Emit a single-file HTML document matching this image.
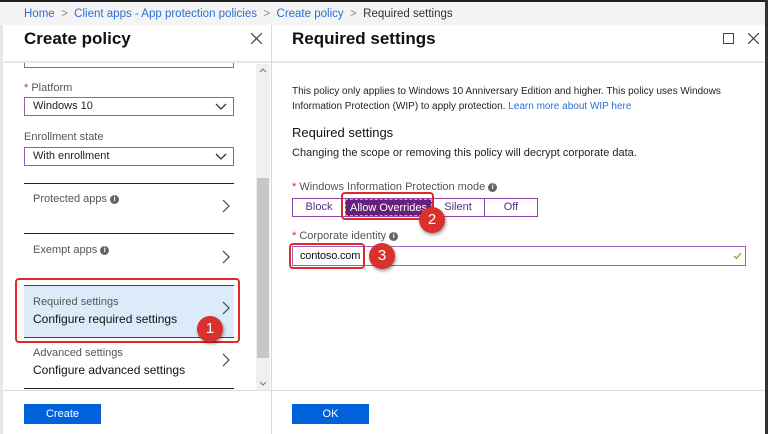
<!DOCTYPE html>
<html><head><style>
*{margin:0;padding:0;box-sizing:border-box}
body{width:768px;height:434px;overflow:hidden;background:#fff;font-family:"Liberation Sans",sans-serif;position:relative;color:#222}
.a{position:absolute}
.lbl{font-size:11px;color:#555}
.sel{position:absolute;left:24px;width:210px;height:19px;border:1px solid #9b59b6;font-size:11px;padding:2px 8px;color:#222}
.sel svg{position:absolute;right:6px;top:5px}
.hr{position:absolute;left:24px;width:210px;height:1px;background:#222}
.chev{position:absolute;left:222px}
.info{display:inline-block;width:9px;height:9px;border-radius:50%;background:#666;color:#fff;font-size:7px;text-align:center;line-height:9px;font-weight:bold;vertical-align:1px;margin-left:3px}
.badge{position:absolute;width:26px;height:26px;border-radius:50%;background:#d9312b;color:#fff;font-size:15px;text-align:center;line-height:26px;box-shadow:1px 2px 3px rgba(0,0,0,.4)}
.red{position:absolute;border:2px solid #e02a2a;border-radius:4px}
</style></head><body>
<div class="a" style="left:0;top:0;width:768px;height:2px;background:#222"></div>
<div class="a" style="left:765px;top:0;width:3px;height:434px;background:#333"></div>
<div class="a" style="left:0;top:2px;width:765px;height:23px;background:#f4f4f4;font-size:11.5px;line-height:24px;padding-left:24px;color:#2a6fd6">Home <span style="color:#888">&nbsp;&gt;&nbsp;</span> Client apps - App protection policies <span style="color:#888">&nbsp;&gt;&nbsp;</span> Create policy <span style="color:#888">&nbsp;&gt;&nbsp;</span> <span style="color:#333">Required settings</span></div>
<div class="a" style="left:0;top:25px;width:3px;height:409px;background:#e8e8e8"></div>
<!-- left panel -->
<div class="a" style="left:24px;top:29px;font-size:17px;font-weight:bold;color:#111">Create policy</div>
<svg class="a" style="left:251px;top:33px" width="11" height="11"><path d="M0 0L11 11M11 0L0 11" stroke="#444" stroke-width="1.2"/></svg>
<div class="a" style="left:3px;top:61px;width:268px;height:2px;background:#e6e6e6"></div>
<div class="a" style="left:24px;top:63px;width:210px;height:5px;border:1px solid #9b59b6;border-top:none"></div>
<div class="a lbl" style="left:24px;top:82px"><span style="color:#d22">*</span> Platform</div>
<div class="sel" style="top:97px">Windows 10<svg width="12" height="8"><path d="M1 1L6 6L11 1" fill="none" stroke="#333" stroke-width="1.3"/></svg></div>
<div class="a lbl" style="left:24px;top:131px">Enrollment state</div>
<div class="sel" style="top:147px">With enrollment<svg width="12" height="8"><path d="M1 1L6 6L11 1" fill="none" stroke="#333" stroke-width="1.3"/></svg></div>
<div class="hr" style="top:183px"></div>
<div class="a lbl" style="left:33px;top:193px">Protected apps<span class="info">i</span></div>
<svg class="chev" style="top:199px" width="8" height="14"><path d="M1 1L7 7L1 13" fill="none" stroke="#444" stroke-width="1.2"/></svg>
<div class="hr" style="top:233px"></div>
<div class="a lbl" style="left:33px;top:244px">Exempt apps<span class="info">i</span></div>
<svg class="chev" style="top:250px" width="8" height="14"><path d="M1 1L7 7L1 13" fill="none" stroke="#444" stroke-width="1.2"/></svg>
<div class="a" style="left:24px;top:285px;width:210px;height:53px;background:#dcebf9;border-top:1px solid #444;border-bottom:1px solid #444"></div>
<div class="a lbl" style="left:33px;top:296px">Required settings</div>
<div class="a" style="left:33px;top:312px;font-size:12px;color:#111">Configure required settings</div>
<svg class="chev" style="top:301px" width="8" height="14"><path d="M1 1L7 7L1 13" fill="none" stroke="#444" stroke-width="1.2"/></svg>
<div class="red" style="left:15px;top:278px;width:225px;height:65px"></div>
<div class="badge" style="left:197px;top:316px">1</div>
<div class="a lbl" style="left:33px;top:347px">Advanced settings</div>
<div class="a" style="left:33px;top:363px;font-size:12px;color:#111">Configure advanced settings</div>
<svg class="chev" style="top:353px" width="8" height="14"><path d="M1 1L7 7L1 13" fill="none" stroke="#444" stroke-width="1.2"/></svg>
<div class="hr" style="top:388px"></div>
<!-- scrollbar -->
<div class="a" style="left:256px;top:64px;width:14px;height:326px;background:#f0f0f0"></div>
<div class="a" style="left:257px;top:178px;width:12px;height:180px;background:#c6c6c6"></div>
<svg class="a" style="left:259px;top:68px" width="8" height="5"><path d="M1 4L4 1L7 4" fill="none" stroke="#777"/></svg>
<svg class="a" style="left:259px;top:381px" width="8" height="5"><path d="M1 1L4 4L7 1" fill="none" stroke="#777"/></svg>
<div class="a" style="left:3px;top:390px;width:268px;height:1px;background:#ddd"></div>
<div class="a" style="left:24px;top:404px;width:77px;height:20px;background:#0063db;color:#fff;font-size:11px;text-align:center;line-height:20px">Create</div>
<!-- divider -->
<div class="a" style="left:271px;top:25px;width:1px;height:409px;background:#d8d8d8"></div>
<!-- right panel -->
<div class="a" style="left:292px;top:29px;font-size:17px;font-weight:bold;color:#111">Required settings</div>
<div class="a" style="left:723px;top:33px;width:11px;height:11px;border:1.2px solid #444"></div>
<svg class="a" style="left:748px;top:33px" width="11" height="11"><path d="M0 0L11 11M11 0L0 11" stroke="#444" stroke-width="1.2"/></svg>
<div class="a" style="left:272px;top:61px;width:493px;height:2px;background:#e6e6e6"></div>
<div class="a" style="left:292px;top:84px;font-size:10px;line-height:15px;color:#222;width:470px">This policy only applies to Windows 10 Anniversary Edition and higher. This policy uses Windows Information Protection (WIP) to apply protection. <span style="color:#2a6fd6">Learn more about WIP here</span></div>
<div class="a" style="left:292px;top:125px;font-size:13px;color:#111">Required settings</div>
<div class="a" style="left:292px;top:147px;font-size:11px;color:#222">Changing the scope or removing this policy will decrypt corporate data.</div>
<div class="a lbl" style="left:292px;top:181px"><span style="color:#d22">*</span> Windows Information Protection mode<span class="info">i</span></div>
<div class="a" style="left:292px;top:198px;width:246px;height:19px;border:1px solid #8e44ad;font-size:11px;line-height:17px;color:#5b2a86">
<span class="a" style="left:0;width:52px;text-align:center">Block</span>
<span class="a" style="left:52px;width:87px;background:#68217a;color:#fff;text-align:center;height:17px;border:1px dashed #7cc">Allow Overrides</span>
<span class="a" style="left:139px;width:52px;text-align:center">Silent</span>
<span class="a" style="left:191px;width:53px;text-align:center;border-left:1px solid #8e44ad">Off</span></div>
<div class="red" style="left:341px;top:192px;width:93px;height:28px"></div>
<div class="badge" style="left:419px;top:207px">2</div>
<div class="a lbl" style="left:292px;top:230px"><span style="color:#d22">*</span> Corporate identity<span class="info">i</span></div>
<div class="a" style="left:292px;top:246px;width:454px;height:20px;border:1px solid #a35fc1;font-size:11px;line-height:18px;padding-left:7px;color:#111"><span style="letter-spacing:-0.2px">contoso.com</span>
<svg class="a" style="left:440px;top:5px" width="9" height="8"><path d="M1 4L3.5 6.5L8 1" fill="none" stroke="#7ab32e" stroke-width="1.3"/></svg></div>
<div class="red" style="left:289px;top:243px;width:76px;height:26px"></div>
<div class="badge" style="left:369px;top:243px">3</div>
<div class="a" style="left:272px;top:390px;width:493px;height:1px;background:#ddd"></div>
<div class="a" style="left:292px;top:404px;width:77px;height:20px;background:#0063db;color:#fff;font-size:11px;text-align:center;line-height:20px">OK</div>
</body></html>
